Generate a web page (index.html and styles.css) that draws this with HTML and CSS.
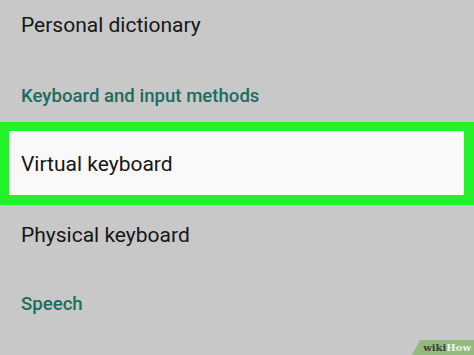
FILE: index.html
```html
<!DOCTYPE html>
<html>
<head>
<meta charset="utf-8">
<link rel="stylesheet" href="styles.css">
</head>
<body>
<div class="screen">
  <div class="item first">Personal dictionary</div>
  <div class="header kb">Keyboard and input methods</div>
  <div class="highlight">
    <div class="item">Virtual keyboard</div>
  </div>
  <div class="item phys">Physical keyboard</div>
  <div class="header speech">Speech</div>
  <div class="badge"><span class="wiki">wiki</span><span class="how">How</span></div>
</div>
</body>
</html>
```
FILE: styles.css
```css
html, body {
  margin: 0;
  padding: 0;
}
body {
  background: #c8c8c8;
  font-family: Roboto, "Liberation Sans", sans-serif;
}
.screen {
  position: relative;
  width: 474px;
  height: 355px;
  overflow: hidden;
  display: flex;
  flex-direction: column;
}
.item {
  font-size: 21px;
  line-height: 24px;
  color: #161616;
  padding-left: 21px;
}
.first {
  margin-top: 13px;
}
.header {
  font-size: 18.6px;
  line-height: 22px;
  font-weight: 500;
  color: #1d6c5f;
  padding-left: 21px;
}
.kb {
  margin-top: 48px;
}
.highlight {
  margin-top: 15px;
  border-style: solid;
  border-color: #23f22b;
  border-width: 9px 10px 10px 9px;
  background: #f9f9f9;
  height: 64px;
  box-sizing: content-box;
}
.highlight .item {
  padding-left: 12px;
  margin-top: 21px;
}
.phys {
  margin-top: 18px;
}
.speech {
  margin-top: 46px;
}
.badge {
  position: absolute;
  right: 0;
  bottom: 0;
  width: 62px;
  height: 15px;
  background: #94b97c;
  clip-path: polygon(8px 0, 100% 0, 100% 100%, 0 100%);
  font-family: "DejaVu Serif", "Liberation Serif", serif;
  font-weight: bold;
  font-size: 10px;
  line-height: 15px;
  text-align: right;
  padding-right: 3px;
  box-sizing: border-box;
}
.wiki {
  color: #3a3f36;
}
.how {
  color: #eef3ea;
}
```
